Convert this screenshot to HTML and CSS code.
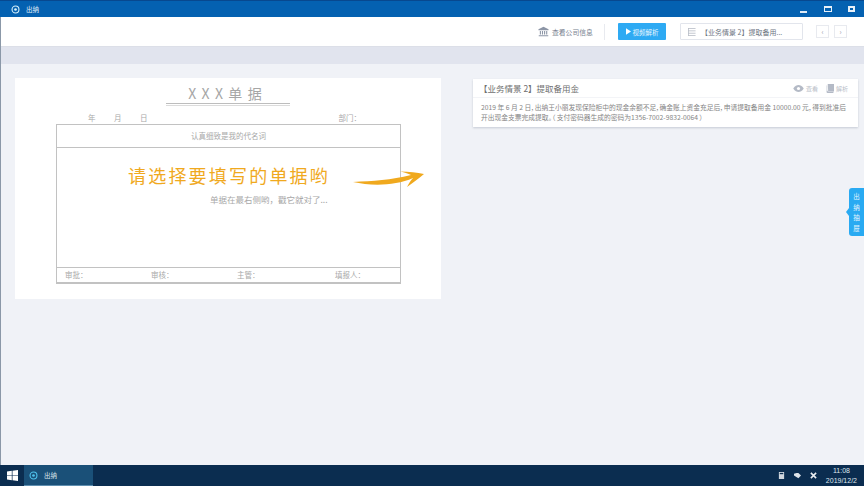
FILE: index.html
```html
<!DOCTYPE html>
<html lang="zh">
<head>
<meta charset="utf-8">
<title>出纳</title>
<link rel="stylesheet" href="styles.css">
</head>
<body>
<div class="app">
  <header class="titlebar">
    <div class="title-left">
      <svg class="app-icon" viewBox="0 0 12 12"><circle cx="6" cy="6" r="4.6" fill="none" stroke="#d5f0fb" stroke-width="1.5"/><circle cx="6" cy="6" r="1.8" fill="#d5f0fb"/></svg>
      <span>出纳</span>
    </div>
    <div class="win-controls">
      <span class="win-min"></span>
      <span class="win-max"></span>
      <span class="win-close"></span>
    </div>
  </header>
  <div class="toolbar">
    <svg class="bank-icon" viewBox="0 0 12 12"><path d="M6 .8 11.5 3.6V4.6H.5V3.6Z" fill="#8c95a6"/><path d="M2 5.4h1.2v4H2zM4.3 5.4h1.2v4H4.3zM6.6 5.4h1.2v4H6.6zM8.9 5.4h1.2v4H8.9zM.8 10h10.4v1.2H.8z" fill="#8c95a6"/></svg>
    <span class="company">查看公司信息</span>
    <span class="tool-sep"></span>
    <div class="video-btn"><svg viewBox="0 0 6 8" class="play"><path d="M0 0 6 4 0 8Z" fill="#fff"/></svg><span>视频解析</span></div>
    <div class="select-box">
      <svg class="list-icon" viewBox="0 0 9 9"><path d="M.5 0v9M.5 .5h8M.5 3.2h8M.5 5.9h8M.5 8.5h8" stroke="#aab0bb" stroke-width=".8" fill="none"/></svg>
      <span>【业务情景 2】提取备用...</span>
    </div>
    <div class="pager"><span>‹</span><span>›</span></div>
  </div>
  <div class="band"></div>
  <main class="content">
    <section class="bill-card">
      <div class="bill-title">X X X 单 据</div>
      <div class="bill-rule"></div>
      <div class="date-row">
        <div class="date-left"><span>年</span><span>月</span><span>日</span></div>
        <span class="dept">部门：</span>
      </div>
      <div class="bill-table">
        <div class="bill-head">认真细致是我的代名词</div>
        <div class="bill-body">
          <div class="hand">请选择要填写的单据哟</div>
          <div class="hint">单据在最右侧哟，戳它就对了...</div>
          <svg class="arrow" viewBox="0 0 72 16"><path d="M0 11C20 10 38 9 58 4 54 2 50 1 47 .5 56 .5 64 1.500 71 3 66 7 60 12 54 16 56 12 58 9 60 7 42 15 18 15 0 11Z" fill="#f0a91e"/></svg>
        </div>
        <div class="bill-foot">
          <span class="f1">审批：</span><span class="f2">审核：</span><span class="f3">主管：</span><span class="f4">填报人：</span>
        </div>
      </div>
    </section>
    <section class="case-card">
      <div class="case-head">
        <h1>【业务情景 2】提取备用金</h1>
        <div class="case-tools">
          <svg class="eye" viewBox="0 0 12 8"><path d="M0 4C2 1 4 0 6 0s4 1 6 4c-2 3-4 4-6 4S2 7 0 4Z" fill="#b4bac6"/><circle cx="6" cy="4" r="1.800" fill="#fff"/></svg><span>查看</span>
          <svg class="book" viewBox="0 0 9 10"><path d="M2 0h7v8H2a1 1 0 0 0 0 2h6v-1H2.500M1 1.500V9" fill="#b4bac6" stroke="#b4bac6" stroke-width=".6"/></svg><span>解析</span>
        </div>
      </div>
      <p class="case-text">2019 年 6 月 2 日，出纳王小丽发现保险柜中的现金余额不足，确金账上资金充足后，申请提取备用金 10000.00 元，得到批准后<br>开出现金支票完成提取。（ 支付密码器生成的密码为1356-7002-9832-0064 ）</p>
    </section>
    <div class="side-tab"><span>出</span><span>纳</span><span>抽</span><span>屉</span></div>
  </main>
  <footer class="taskbar">
    <svg class="start" viewBox="0 0 11 11"><path d="M0 1.500 4.800.8V5.200H0ZM5.500.7 11 0V5.200H5.500ZM0 5.800H4.800V10.200L0 9.500ZM5.500 5.800H11V11L5.500 10.300Z" fill="#fff"/></svg>
    <div class="task-item">
      <svg class="app-icon" viewBox="0 0 12 12"><circle cx="6" cy="6" r="4.6" fill="none" stroke="#4fc3ee" stroke-width="1.500"/><circle cx="6" cy="6" r="1.800" fill="#4fc3ee"/></svg>
      <span>出纳</span>
    </div>
    <div class="tray">
      <svg class="tray-icon" viewBox="0 0 8 8"><path d="M1 0h6v8H1z" fill="#cfd6de"/><path d="M2 1h4v1.500H2z" fill="#0b2d50"/></svg>
      <svg class="tray-icon" viewBox="0 0 8 8"><path d="M0 2 3 1h2l3 3-3 3L0 4Z" fill="#dfe4ea"/></svg>
      <svg class="tray-icon" viewBox="0 0 8 8"><path d="M1 1 7 7M7 1 1 7" stroke="#e8ecf0" stroke-width="1.800"/></svg>
      <div class="clock"><span>11:08</span><span>2019/12/2</span></div>
    </div>
  </footer>
</div>
</body>
</html>
```
FILE: styles.css
```css
* { box-sizing: border-box; }
html, body { margin: 0; height: 100%; overflow: hidden; }
body { font-family: "Noto Sans CJK SC", "Liberation Sans", sans-serif; color: #888; }
.app { width: 864px; height: 486px; display: flex; flex-direction: column; background: #f0f2f7; border-left: 1px solid #8b98a8; }
.titlebar { height: 17px; flex: none; background: #0461b1; border-top: 1px solid #07488f; display: flex; align-items: center; justify-content: space-between; color: #e4f1fb; font-size: 6.500px; padding-left: 11px; margin-left: -1px; }
.title-left { display: flex; align-items: center; gap: 6px; }
.app-icon { width: 9px; height: 9px; display: block; }
.win-controls { display: flex; align-items: center; }
.win-controls span { display: block; }
.win-min { width: 7px; height: 2px; background: #dfeaf5; margin-top: 6px; margin-right: 17px; }
.win-max { width: 8px; height: 6px; border: 1px solid #e8f0f8; border-top-width: 2px; margin-right: 16px; }
.win-close { width: 7px; height: 6px; border: 2px solid #e8f0f8; margin-right: 9px; }
.toolbar { height: 30px; flex: none; background: #fff; display: flex; align-items: center; border-bottom: 1px solid #dcdfe8; color: #77808e; font-size: 6.800px; }
.bank-icon { width: 11px; height: 11px; margin-left: 537px; flex: none; }
.company { margin-left: 3px; width: 41px; white-space: nowrap; }
.tool-sep { width: 1px; height: 16px; background: #e8eaef; margin: 0 13px 0 11px; }
.video-btn { width: 48px; height: 17px; background: #2eaaf3; border-radius: 1px; color: #e9f6fe; display: flex; align-items: center; justify-content: center; gap: 2px; font-size: 6.500px; }
.play { width: 5px; height: 7px; }
.select-box { width: 123px; height: 17px; margin-left: 14px; border: 1px solid #e2e5ec; border-radius: 1px; display: flex; align-items: center; padding-left: 7px; gap: 5px; color: #6e7683; font-size: 7px; white-space: nowrap; }
.list-icon { width: 8px; height: 8px; flex: none; }
.pager { display: flex; gap: 5px; margin-left: 13px; }
.pager span { width: 13px; height: 13px; border: 1px solid #e8eaef; display: flex; align-items: center; justify-content: center; font-size: 7px; line-height: 1; color: #99a; }
.band { height: 17px; flex: none; background: #e1e4ee; }
.content { flex: 1; position: relative; padding: 14px 6px 0 14px; display: flex; align-items: flex-start; gap: 32px; }
.bill-card { width: 426px; height: 221px; flex: none; background: #fff; padding: 6px 40px 0 41px; display: flex; flex-direction: column; }
.bill-title { text-align: center; font-size: 14px; line-height: 19px; color: #a6a6a6; letter-spacing: 1.100px; margin-right: 6px; }
.bill-rule { width: 124px; height: 3px; margin-left: 110px; border-top: 1px solid #bdbdbd; border-bottom: 1px solid #dcdcdc; }
.date-row { display: flex; justify-content: space-between; font-size: 7.500px; line-height: 10px; margin-top: 7px; height: 11px; flex: none; color: #a8a8a8; padding: 0 40px 0 32px; }
.date-left { display: flex; gap: 18.500px; }
.bill-table { height: 160px; flex: none; border: 1px solid #c2c2c2; border-bottom-width: 2px; display: flex; flex-direction: column; }
.bill-head { height: 23px; flex: none; border-bottom: 1px solid #c2c2c2; text-align: center; font-size: 7.500px; line-height: 22px; color: #a8a8a8; }
.bill-body { flex: 1; position: relative; border-bottom: 1px solid #c2c2c2; padding-top: 15px; }
.hand { margin-left: 71px; font-size: 18px; line-height: 24px; letter-spacing: 2.200px; color: #f0a91e; font-weight: 400; white-space: nowrap; }
.hint { margin: 6px 0 0 153px; font-size: 8.500px; line-height: 12px; color: #a8a8a8; white-space: nowrap; }
.arrow { position: absolute; left: 296px; top: 23px; width: 72px; height: 16px; }
.bill-foot { height: 14px; flex: none; position: relative; font-size: 7.500px; line-height: 14px; color: #a8a8a8; display: flex; padding-left: 8px; }
.bill-foot span { display: block; }
.f1 { width: 86px; } .f2 { width: 86px; } .f3 { width: 98px; }
.case-card { width: 385px; height: 48px; flex: none; margin-top: 1px; background: #fff; box-shadow: 0 1px 2px rgba(120,130,150,.35); }
.case-head { height: 19px; display: flex; align-items: center; justify-content: space-between; padding: 0 10px 0 6px; border-bottom: 1px solid #f3f4f7; }
.case-head h1 { margin: 0; font-size: 8.500px; font-weight: 400; color: #707070; white-space: nowrap; }
.case-tools { display: flex; align-items: center; font-size: 6px; color: #b9bec8; }
.eye { width: 11px; height: 7px; margin-right: 2px; }
.book { width: 8px; height: 9px; margin: 0 2px 0 8px; }
.case-text { margin: 4px 0 0 8px; font-size: 6.750px; line-height: 10px; color: #858585; white-space: nowrap; font-feature-settings: "palt"; }
.side-tab { position: absolute; right: 0; top: 124px; width: 15px; height: 48px; background: #29aaf2; border-radius: 3px 0 0 3px; display: flex; flex-direction: column; align-items: center; justify-content: center; color: #e8f6fe; font-size: 6.500px; line-height: 10.500px; }
.side-tab::before { content: ""; position: absolute; left: -3px; top: 20px; border-style: solid; border-width: 4px 3px 4px 0; border-color: transparent #29aaf2 transparent transparent; }
.taskbar { height: 21px; flex: none; background: #0b2d50; margin-left: -1px; display: flex; align-items: center; color: #dfe7ee; font-size: 6.500px; }
.start { width: 11px; height: 11px; margin-left: 7px; flex: none; }
.task-item { width: 69px; height: 21px; margin-left: 6px; background: #1a5078; border-bottom: 1px solid #5f8fb0; display: flex; align-items: center; gap: 6px; padding-left: 5px; }
.tray { margin-left: auto; display: flex; align-items: center; gap: 9px; padding-right: 7px; }
.tray-icon { width: 7px; height: 7px; }
.clock { display: flex; flex-direction: column; align-items: center; line-height: 10px; font-family: "Liberation Sans", sans-serif; font-size: 7px; }
```
